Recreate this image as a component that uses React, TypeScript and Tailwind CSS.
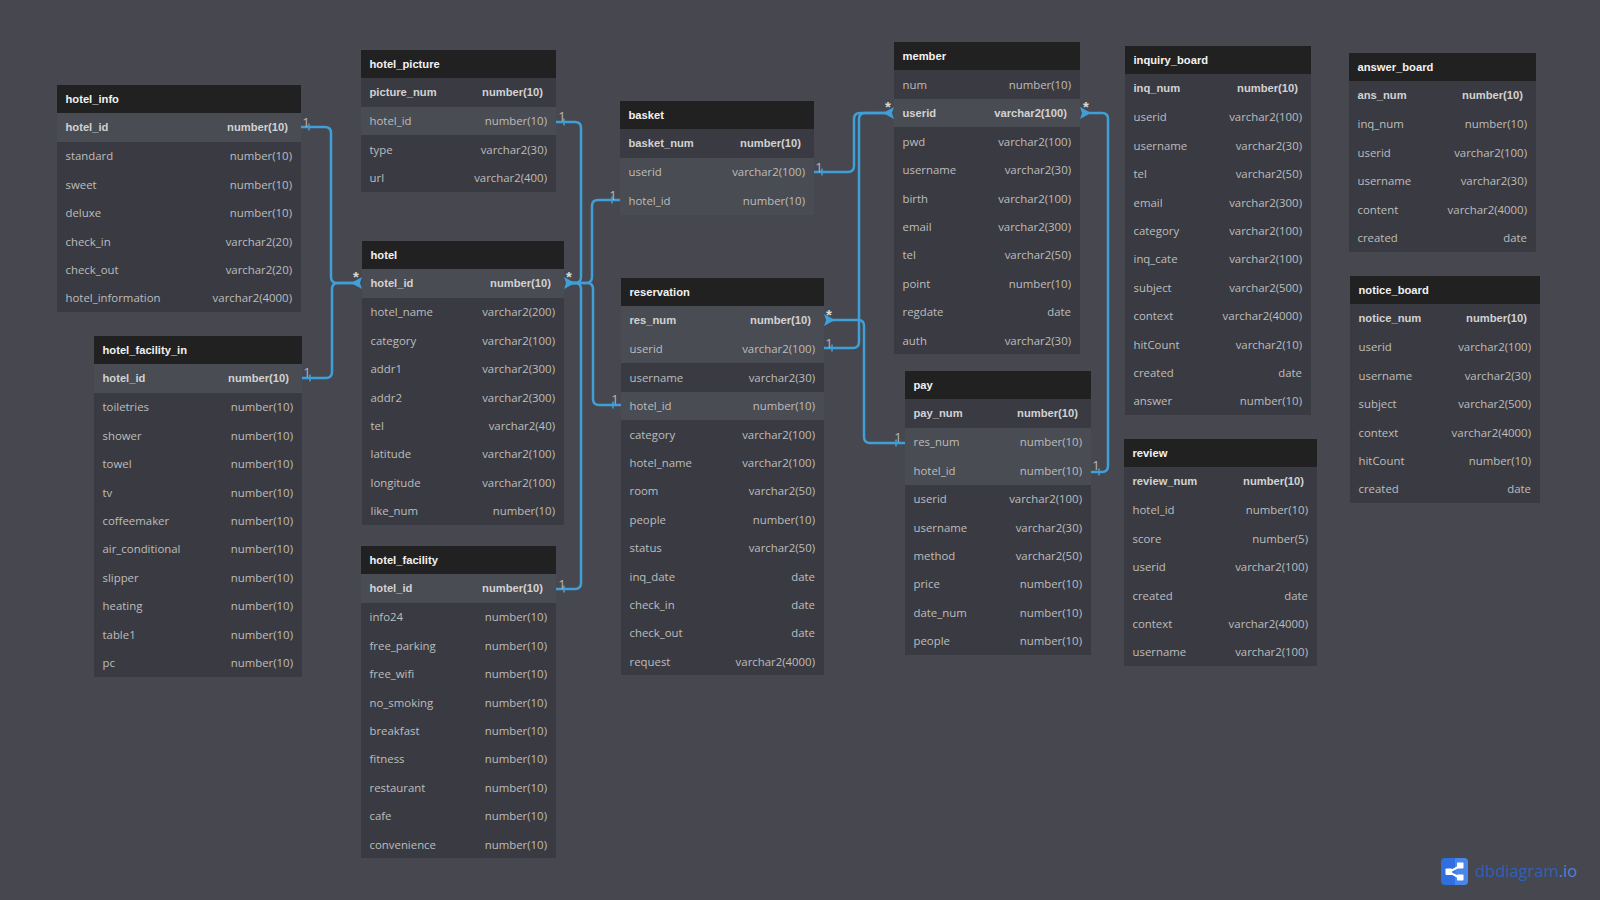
import React from 'react';

type Row = { name: string; type: string; pk?: boolean; ref?: boolean };

interface Table {
  name: string;
  pos: string;
  rows: Row[];
}

const r = (name: string, type: string, flags: '' | 'pk' | 'ref' | 'both' = ''): Row => ({
  name,
  type,
  pk: flags === 'pk' || flags === 'both',
  ref: flags === 'ref' || flags === 'both',
});

const tables: Table[] = [
  {
    name: 'hotel_info',
    pos: 'left-[57px] top-[85px] w-[244px]',
    rows: [
      r('hotel_id', 'number(10)', 'both'),
      r('standard', 'number(10)'),
      r('sweet', 'number(10)'),
      r('deluxe', 'number(10)'),
      r('check_in', 'varchar2(20)'),
      r('check_out', 'varchar2(20)'),
      r('hotel_information', 'varchar2(4000)'),
    ],
  },
  {
    name: 'hotel_picture',
    pos: 'left-[361px] top-[50px] w-[195px]',
    rows: [
      r('picture_num', 'number(10)', 'pk'),
      r('hotel_id', 'number(10)', 'ref'),
      r('type', 'varchar2(30)'),
      r('url', 'varchar2(400)'),
    ],
  },
  {
    name: 'hotel',
    pos: 'left-[362px] top-[241px] w-[202px]',
    rows: [
      r('hotel_id', 'number(10)', 'both'),
      r('hotel_name', 'varchar2(200)'),
      r('category', 'varchar2(100)'),
      r('addr1', 'varchar2(300)'),
      r('addr2', 'varchar2(300)'),
      r('tel', 'varchar2(40)'),
      r('latitude', 'varchar2(100)'),
      r('longitude', 'varchar2(100)'),
      r('like_num', 'number(10)'),
    ],
  },
  {
    name: 'hotel_facility_in',
    pos: 'left-[94px] top-[336px] w-[208px]',
    rows: [
      r('hotel_id', 'number(10)', 'both'),
      r('toiletries', 'number(10)'),
      r('shower', 'number(10)'),
      r('towel', 'number(10)'),
      r('tv', 'number(10)'),
      r('coffeemaker', 'number(10)'),
      r('air_conditional', 'number(10)'),
      r('slipper', 'number(10)'),
      r('heating', 'number(10)'),
      r('table1', 'number(10)'),
      r('pc', 'number(10)'),
    ],
  },
  {
    name: 'hotel_facility',
    pos: 'left-[361px] top-[546px] w-[195px]',
    rows: [
      r('hotel_id', 'number(10)', 'both'),
      r('info24', 'number(10)'),
      r('free_parking', 'number(10)'),
      r('free_wifi', 'number(10)'),
      r('no_smoking', 'number(10)'),
      r('breakfast', 'number(10)'),
      r('fitness', 'number(10)'),
      r('restaurant', 'number(10)'),
      r('cafe', 'number(10)'),
      r('convenience', 'number(10)'),
    ],
  },
  {
    name: 'basket',
    pos: 'left-[620px] top-[101px] w-[194px]',
    rows: [
      r('basket_num', 'number(10)', 'pk'),
      r('userid', 'varchar2(100)', 'ref'),
      r('hotel_id', 'number(10)', 'ref'),
    ],
  },
  {
    name: 'reservation',
    pos: 'left-[621px] top-[278px] w-[203px]',
    rows: [
      r('res_num', 'number(10)', 'both'),
      r('userid', 'varchar2(100)', 'ref'),
      r('username', 'varchar2(30)'),
      r('hotel_id', 'number(10)', 'ref'),
      r('category', 'varchar2(100)'),
      r('hotel_name', 'varchar2(100)'),
      r('room', 'varchar2(50)'),
      r('people', 'number(10)'),
      r('status', 'varchar2(50)'),
      r('inq_date', 'date'),
      r('check_in', 'date'),
      r('check_out', 'date'),
      r('request', 'varchar2(4000)'),
    ],
  },
  {
    name: 'member',
    pos: 'left-[894px] top-[42px] w-[186px]',
    rows: [
      r('num', 'number(10)'),
      r('userid', 'varchar2(100)', 'both'),
      r('pwd', 'varchar2(100)'),
      r('username', 'varchar2(30)'),
      r('birth', 'varchar2(100)'),
      r('email', 'varchar2(300)'),
      r('tel', 'varchar2(50)'),
      r('point', 'number(10)'),
      r('regdate', 'date'),
      r('auth', 'varchar2(30)'),
    ],
  },
  {
    name: 'pay',
    pos: 'left-[905px] top-[371px] w-[186px]',
    rows: [
      r('pay_num', 'number(10)', 'pk'),
      r('res_num', 'number(10)', 'ref'),
      r('hotel_id', 'number(10)', 'ref'),
      r('userid', 'varchar2(100)'),
      r('username', 'varchar2(30)'),
      r('method', 'varchar2(50)'),
      r('price', 'number(10)'),
      r('date_num', 'number(10)'),
      r('people', 'number(10)'),
    ],
  },
  {
    name: 'inquiry_board',
    pos: 'left-[1125px] top-[46px] w-[186px]',
    rows: [
      r('inq_num', 'number(10)', 'pk'),
      r('userid', 'varchar2(100)'),
      r('username', 'varchar2(30)'),
      r('tel', 'varchar2(50)'),
      r('email', 'varchar2(300)'),
      r('category', 'varchar2(100)'),
      r('inq_cate', 'varchar2(100)'),
      r('subject', 'varchar2(500)'),
      r('context', 'varchar2(4000)'),
      r('hitCount', 'varchar2(10)'),
      r('created', 'date'),
      r('answer', 'number(10)'),
    ],
  },
  {
    name: 'review',
    pos: 'left-[1124px] top-[439px] w-[193px]',
    rows: [
      r('review_num', 'number(10)', 'pk'),
      r('hotel_id', 'number(10)'),
      r('score', 'number(5)'),
      r('userid', 'varchar2(100)'),
      r('created', 'date'),
      r('context', 'varchar2(4000)'),
      r('username', 'varchar2(100)'),
    ],
  },
  {
    name: 'answer_board',
    pos: 'left-[1349px] top-[53px] w-[187px]',
    rows: [
      r('ans_num', 'number(10)', 'pk'),
      r('inq_num', 'number(10)'),
      r('userid', 'varchar2(100)'),
      r('username', 'varchar2(30)'),
      r('content', 'varchar2(4000)'),
      r('created', 'date'),
    ],
  },
  {
    name: 'notice_board',
    pos: 'left-[1350px] top-[276px] w-[190px]',
    rows: [
      r('notice_num', 'number(10)', 'pk'),
      r('userid', 'varchar2(100)'),
      r('username', 'varchar2(30)'),
      r('subject', 'varchar2(500)'),
      r('context', 'varchar2(4000)'),
      r('hitCount', 'number(10)'),
      r('created', 'date'),
    ],
  },
];

const lines = [
  'M301 127H325Q331 127 331 133V277Q331 283 337 283H358',
  'M302 378H326Q332 378 332 372V289Q332 283 338 283H358',
  'M556 122H575Q581 122 581 128V277Q581 283 575 283H568',
  'M556 589H575Q581 589 581 583V289Q581 283 575 283H568',
  'M620 200H598Q592 200 592 206V277Q592 283 586 283H568',
  'M621 405H599Q593 405 593 399V289Q593 283 587 283H568',
  'M814 172H848Q854 172 854 166V119Q854 113 860 113H890',
  'M824 348H853Q859 348 859 342V119Q859 113 865 113H890',
  'M828 320H858Q864 320 864 326V437Q864 443 870 443H905',
  'M1091 472H1102Q1108 472 1108 466V119Q1108 113 1102 113H1084',
];

const ticks = [
  [309, 127],
  [310, 378],
  [564, 122],
  [564, 589],
  [612, 200],
  [613, 405],
  [822, 172],
  [832, 348],
  [896, 443],
  [1099, 472],
];

// crow's foot: base on the table edge, tip pointing away from it
const feet = [
  [362, 283, -1],
  [564, 283, 1],
  [894, 113, -1],
  [824, 320, 1],
  [1080, 113, 1],
];

const ones = [
  [306, 127],
  [307, 377],
  [562, 121],
  [562, 589],
  [613, 200],
  [615, 404],
  [819, 172],
  [829, 348],
  [898, 442],
  [1096, 470],
];

const stars = [
  [356, 282],
  [569, 282],
  [888, 112],
  [829, 320],
  [1086, 112],
];

function TableCard({ table }: { table: Table }) {
  return (
    <div className={`absolute ${table.pos}`}>
      <div className="h-[28.4px] flex items-center px-[8.5px] bg-[#212121] text-[#f2f2f2] text-[11.2px] font-bold font-['Liberation_Sans',sans-serif]">
        {table.name}
      </div>
      {table.rows.map(row => (
        <div
          key={row.name}
          className={`h-[28.4px] flex items-center justify-between pl-[8.5px] ${row.pk ? 'pr-[13px]' : 'pr-[9px]'} ${
            row.ref ? 'bg-[#4a4c53]' : 'bg-[#3a3b42]'
          } ${
            row.pk
              ? "text-[#d2d2d2] text-[11.2px] font-bold font-['Liberation_Sans',sans-serif]"
              : "text-[#bdbdbd] text-[11.4px] font-['Open_Sans',sans-serif]"
          }`}
        >
          <span>{row.name}</span>
          <span>{row.type}</span>
        </div>
      ))}
    </div>
  );
}

function Connections() {
  return (
    <svg className="absolute inset-0 pointer-events-none" width={1600} height={900} viewBox="0 0 1600 900" fill="none">
      {lines.map(d => (
        <path key={d} d={d} stroke="#3f9fd6" strokeWidth={2.5} />
      ))}
      {ticks.map(([x, y]) => (
        <path key={`${x}-${y}`} d={`M${x} ${y - 3.5}V${y + 3.5}`} stroke="#3f9fd6" strokeWidth={1.6} />
      ))}
      {feet.map(([x, y, dir]) => (
        <path
          key={`${x}-${y}`}
          d={`M${x} ${y - 6}L${x + dir * 11} ${y}L${x} ${y + 6}L${x + dir * 2} ${y}Z`}
          fill="#3f9fd6"
        />
      ))}
      {ones.map(([x, y]) => (
        <text key={`${x}-${y}`} x={x} y={y} textAnchor="middle" fontSize={13} fill="#b8b8b8" fontFamily="'Open Sans', sans-serif">
          1
        </text>
      ))}
      {stars.map(([x, y]) => (
        <text key={`${x}-${y}`} x={x} y={y} textAnchor="middle" fontSize={15} fontWeight={700} fill="#d8d8d8" fontFamily="'Liberation Sans', sans-serif">
          *
        </text>
      ))}
    </svg>
  );
}

function Logo() {
  return (
    <div className="absolute left-[1441px] top-[858px] flex items-center gap-[7px]">
      <svg width="27" height="27" viewBox="0 0 27 27">
        <rect width="27" height="27" rx="4" fill="#2f6fe0" />
        <path d="M14 0H23A4 4 0 0 1 27 4V23A4 4 0 0 1 23 27H14Z" fill="#4a86ea" />
        <path d="M19 8L8 14L19 20" stroke="#fff" strokeWidth="2" fill="none" />
        <rect x="16" y="4.500" width="6.500" height="6" rx="0.800" fill="#fff" />
        <rect x="16" y="16.500" width="6.500" height="6" rx="0.800" fill="#fff" />
        <rect x="4.500" y="10.500" width="6.500" height="6.500" rx="0.800" fill="#fff" />
      </svg>
      <span className="text-[16.5px] text-[#2d62b8] font-['Open_Sans',sans-serif]">
        dbdiagram<span className="text-[#4d83d6]">.io</span>
      </span>
    </div>
  );
}

export default function App() {
  return (
    <div className="relative w-[1600px] h-[900px] overflow-hidden bg-[#46474f]">
      {tables.map(t => (
        <TableCard key={t.name} table={t} />
      ))}
      <Connections />
      <Logo />
    </div>
  );
}
